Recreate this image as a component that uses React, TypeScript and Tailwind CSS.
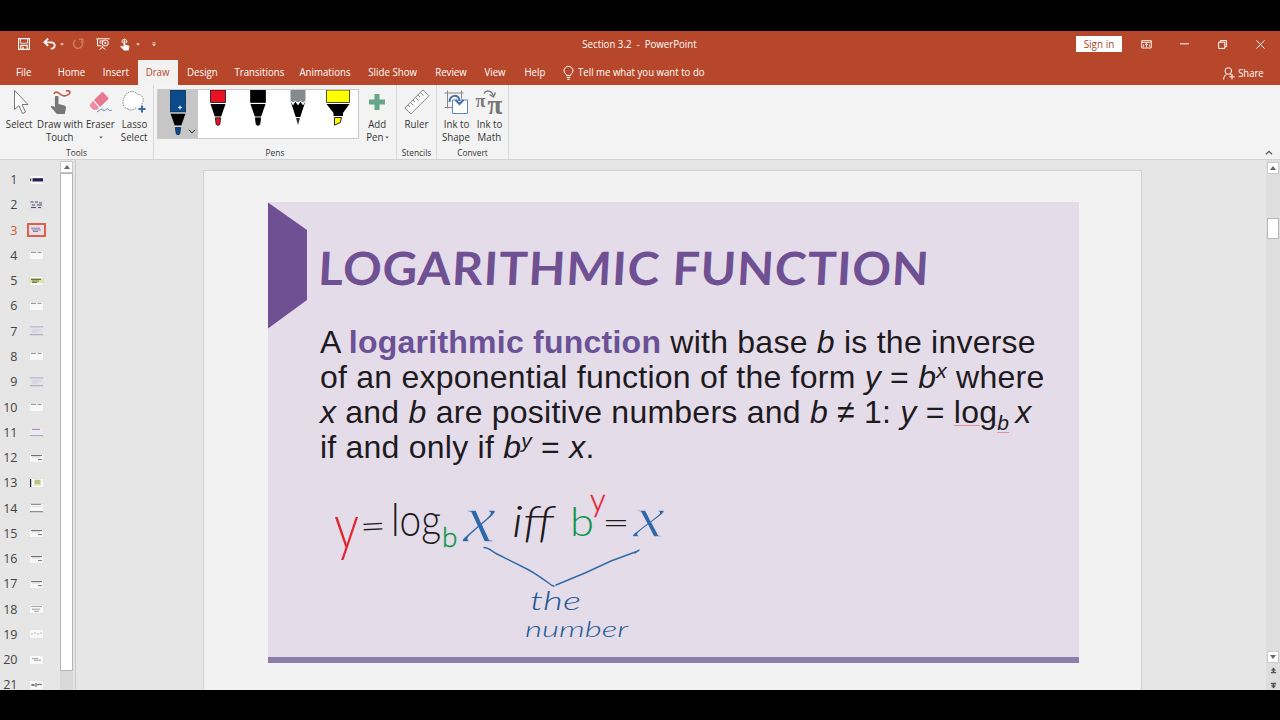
import type { ReactNode } from 'react';
import { clsx } from 'clsx';

const tabs = [
  { label: 'File', width: 'w-12' },
  { label: 'Home', width: 'w-12' },
  { label: 'Insert', width: 'w-[42px] pr-0.5' },
  { label: 'Draw', width: 'w-10' },
  { label: 'Design', width: 'w-12' },
  { label: 'Transitions', width: 'w-[66px]' },
  { label: 'Animations', width: 'w-[66px]' },
  { label: 'Slide Show', width: 'w-[70px]' },
  { label: 'Review', width: 'w-[46px]' },
  { label: 'View', width: 'w-[42px]' },
  { label: 'Help', width: 'w-[38px]' },
];

// kind decides what is sketched inside the tiny slide preview
const slides = [
  'dark', 'dense', 'text', 'top', 'green', 'top', 'bars', 'top', 'bars', 'top', 'purple',
  'corner', 'side', 'lines', 'corner', 'corner', 'corner', 'para', 'faint', 'mid', 'graph',
];

function Thumb({ kind }: { kind: string }) {
  return (
    <svg width="15" height="10" viewBox="0 0 15 10" fill="none">
      <rect width="15" height="10" fill="#f8f8f8" />
      <rect x=".25" y=".25" width="14.5" height="9.5" stroke="#d2d2d6" strokeWidth=".5" />
      {kind === 'dark' && <><rect x="3.5" y="3.2" width="10.5" height="3.3" fill="#25204f" /><rect x="1" y="3.5" width="1.3" height="2.6" fill="#444" /></>}
      {kind === 'dense' && <><rect x="1" y="1" width="13" height="8" fill="#dcdce6" /><path d="M1.5 2h3M6 2h3M10 3h3M3 5h3M8 5h5M2 7.5h5M9 7.5h3" stroke="#55556b" strokeWidth="1.1" /></>}
      {kind === 'text' && <><rect width="15" height="10" fill="#e7e0ea" /><path d="M2 3.2h9M3 5h9M4 6.5h5" stroke="#8c7da0" strokeWidth="1" /></>}
      {kind === 'top' && <path d="M2 2.3h5M8.5 2.3h4" stroke="#85858d" strokeWidth="1" />}
      {kind === 'green' && <><rect y="2" width="15" height="5" fill="#dce4b0" /><path d="M2 3.4h10M3 5h7M3 6.5h5" stroke="#6d7840" strokeWidth="1.1" /></>}
      {kind === 'bars' && <><rect x="1" y="2" width="13" height="6" fill="#e2e2ed" /><path d="M1 1h13M1 8.7h13" stroke="#a3a3ae" /><path d="M3 4h9M3 6h6" stroke="#c2c2d0" strokeWidth=".6" /></>}
      {kind === 'purple' && <><rect x="1" y="1" width="13" height="8" fill="#eee8f2" /><path d="M3 2.4h8" stroke="#9784a6" /><path d="M1 8.6h13" stroke="#aaa0b4" /></>}
      {kind === 'corner' && <><path d="M2 2.5h11" stroke="#70707a" strokeWidth="1.2" /><path d="M3 4h8" stroke="#b4b4ba" strokeWidth=".5" /><path d="M9 6.6h4" stroke="#777" /></>}
      {kind === 'side' && <><rect x="1" y="1" width="1.2" height="8" fill="#24234d" /><rect x="5" y="1.5" width="7" height="6" fill="#dde1ac" /><path d="M6 3h5M6 5h5" stroke="#89904e" strokeWidth=".8" /></>}
      {kind === 'lines' && <><path d="M2 1.3h10M1 8.7h13" stroke="#77777f" /><path d="M3 3.5h9" stroke="#ccc" strokeWidth=".6" /></>}
      {kind === 'para' && <path d="M2 2.4h11M3 5.2h8M5 7.3h5" stroke="#92929a" strokeWidth=".9" />}
      {kind === 'faint' && <path d="M2 5h2M5 4h2M8 5h2M11 4h2" stroke="#aaa" strokeWidth=".8" />}
      {kind === 'mid' && <path d="M3 3.6h6M5 5.2h7" stroke="#999" strokeWidth=".9" />}
      {kind === 'graph' && <path d="M2 5h4M7 3v4M8 5l3-1 2 1M4 4v2" stroke="#555" strokeWidth="1" />}
    </svg>
  );
}

function SaveIcon() {
  return (
    <svg width="12" height="12" viewBox="0 0 12 12" fill="none" stroke="#fff" strokeWidth="1.1">
      <path d="M.6.6h10.8v10.8H.6z" />
      <path d="M2.4.6v4.6h7.2V.6" strokeWidth=".8" />
      <path d="M2.8 11V7.4h6.4V11" />
      <path d="M5 8.7V11" strokeWidth="1.3" />
    </svg>
  );
}

function UndoIcon() {
  return (
    <svg width="13" height="12" viewBox="0 0 13 12" fill="none" stroke="#fff" strokeWidth="1.8">
      <path d="M5.2.7 1.3 4.3l3.9 3.6M1.5 4.3h6.6c5 0 4.7 6.3-.3 6.3" />
    </svg>
  );
}

function RedoIcon() {
  return (
    <svg width="12" height="12" viewBox="0 0 12 12" fill="none" stroke="#d2795c" strokeWidth="1.5">
      <path d="M3.4 2.2a4.5 4.5 0 1 0 5.8.5M6.8 1.2h3.9v3.7" />
    </svg>
  );
}

function ShowIcon() {
  return (
    <svg width="14" height="12" viewBox="0 0 14 12" fill="none" stroke="#fff" strokeWidth="1">
      <path d="M.3.8h13.4M1.5 1v6.8h4M6.5 8v2M3.6 11.4l2.9-2 2.9 2M3.4 3h4M3.4 5h2" />
      <circle cx="9.3" cy="5" r="3" />
      <path d="m8.5 3.6 2.2 1.4-2.2 1.4z" fill="#fff" stroke="none" />
    </svg>
  );
}

function HandIcon({ className }: { className: string }) {
  return (
    <svg className={className} viewBox="0 0 18 20" fill="currentColor">
      <path d="M5 1.5a2 2 0 0 1 4 0V9l6.5 1.6a2.4 2.4 0 0 1 1.8 2.7L16 20H7.2L.8 12.8c-.8-1 .6-2.6 2-1.8L5 12.4z" />
    </svg>
  );
}

function TapIcon() {
  return (
    <svg width="10" height="13" viewBox="0 0 10 13" fill="none">
      <path d="M2.5 5a2.4 2.4 0 1 1 3.8 0" stroke="#fff" />
      <path d="M3.500 3.200a.9.900 0 0 1 1.800 0v3.600l3.200.8q1 .3.800 1.500L8.600 12.500H4L.6 8.900c-.4-.7.4-1.400 1.200-1l1.700.9z" fill="#fff" />
    </svg>
  );
}

function Caret({ className }: { className: string }) {
  return (
    <svg className={className} width="4" height="3" viewBox="0 0 5 3" fill="currentColor">
      <path d="M.3.3h4.4L2.5 2.8z" />
    </svg>
  );
}

function ToolButton({ icon, lines, width, caret }: { icon: ReactNode; lines: string[]; width: string; caret?: boolean }) {
  return (
    <div className={clsx('flex shrink-0 flex-col items-center', width)}>
      <div className="flex h-8 items-center justify-center pt-0.5">{icon}</div>
      {lines.map((line, i) => (
        <div key={line} className="flex h-[13px] items-center leading-[13px] whitespace-nowrap">
          <span className="scale-x-[0.88]">{line}</span>
          {caret && i === 1 && <Caret className="mt-0.5 text-[#555]" />}
        </div>
      ))}
      {caret && lines.length === 1 && <Caret className="mt-1.5 text-[#555]" />}
    </div>
  );
}

function GroupLabel({ children }: { children: string }) {
  return <div className="h-[13px] scale-x-[0.88] text-center text-[9.5px] leading-[13px]">{children}</div>;
}

function Pen({ color }: { color: string }) {
  return (
    <svg width="18" height="37" viewBox="0 0 18 37">
      <path d="M1.5 0h15v12.5h-15z" fill={color} stroke="#111" strokeWidth=".8" />
      <path d="M1.5 14h15L12.2 26.5H5.8z" fill="#000" />
      <path d="M6.3 27.8h5.4l-.9 6.8q-1.8 1.6-3.6 0z" fill={color} stroke="#111" strokeWidth=".8" />
    </svg>
  );
}

function Pencil() {
  return (
    <svg width="18" height="37" viewBox="0 0 18 37">
      <path d="M1.5 0h15v12h-15z" fill="#858a8d" />
      <path d="m1.5 11 2.5 4 2.3-3.6L9 15l2.6-3.6L14 15l2.5-4-5.2 16H6.7z" fill="#000" />
      <path d="m1.5 10.5 2.5 4 2.4-3.6L9 14.5l2.5-3.6 2.5 3.6 2.5-4" fill="none" stroke="#fff" />
      <path d="M7 28h4l-2 7z" fill="#333" />
    </svg>
  );
}

function Highlighter() {
  return (
    <svg width="26" height="37" viewBox="0 0 26 37">
      <path d="M1.5 0h23v12.5h-23z" fill="#ff0" stroke="#222" strokeWidth=".8" />
      <path d="M1.5 14h23L18 23v3H8.500v-3z" fill="#000" />
      <path d="M9.5 27.500h7l-1.200 5-5.800 2.600z" fill="#ff0" stroke="#222" />
    </svg>
  );
}

function Ink() {
  return (
    <svg className="absolute top-[278px] left-[50.5px]" width="370" height="170" viewBox="320 480 370 170" fill="none">
      <g fontFamily="Lato, sans-serif" fontWeight="300" fontSize="50">
        <text x="335" y="549" fontSize="66" textLength="25" lengthAdjust="spacingAndGlyphs" fill="#e2252f">y</text>
        <text x="361" y="538" fontSize="34" textLength="26" lengthAdjust="spacingAndGlyphs" fill="#1d1a20" transform="rotate(-3 374 529)">=</text>
        <text x="392" y="536" fontSize="45" textLength="50" lengthAdjust="spacingAndGlyphs" fill="#1d1a20">log</text>
        <text x="443" y="547" fontSize="28" fill="#12964a" stroke="#12964a" strokeWidth=".4">b</text>
        <text x="513" y="537" fontSize="43" fontStyle="italic" textLength="42" lengthAdjust="spacingAndGlyphs" fill="#1d1a20">iff</text>
        <text x="571" y="536" fontSize="40" textLength="24" lengthAdjust="spacingAndGlyphs" fill="#12964a">b</text>
        <text x="591" y="511" fontSize="31" fill="#e2252f" stroke="#e2252f" strokeWidth=".4">y</text>
        <text x="603" y="533" fontSize="30" textLength="28" lengthAdjust="spacingAndGlyphs" fill="#1d1a20">=</text>
        <text x="531" y="610" fontSize="25" fontStyle="italic" textLength="51" lengthAdjust="spacingAndGlyphs" fill="#245a94">the</text>
        <text x="526" y="637" fontSize="22" fontStyle="italic" textLength="103" lengthAdjust="spacingAndGlyphs" fill="#245a94">number</text>
      </g>
      <g fontFamily="'Liberation Serif', serif" fontStyle="italic" fill="#2c68aa" stroke="#e5dcea" strokeWidth="1.3">
        <text x="464" y="542" fontSize="70" textLength="33" lengthAdjust="spacingAndGlyphs">x</text>
        <text x="634" y="537" fontSize="60" textLength="32" lengthAdjust="spacingAndGlyphs">x</text>
      </g>
      <path d="M485 547.5c5 0 8 4 13 6.500l26 13c11 5 20 12 29 18.500l2 .5M557 585l29-12 26-12 27-10m-3 2 4-3" stroke="#326aa5" strokeWidth="1.4" strokeLinecap="round" />
    </svg>
  );
}

export default function App() {
  return (
    <div className="flex h-[720px] w-[1280px] flex-col overflow-hidden bg-black pt-[31px] pb-[30px] font-['Open_Sans',sans-serif] text-[11px] text-[#333]">
      <header className="h-[54px] shrink-0 bg-[#b7472a] text-white">
        <div className="flex h-7 items-center pb-0.5">
          <div className="flex w-[560px] items-center pl-[18px]">
            <SaveIcon />
            <div className="ml-[13px]"><UndoIcon /></div>
            <Caret className="ml-1" />
            <div className="ml-2"><RedoIcon /></div>
            <div className="ml-3"><ShowIcon /></div>
            <div className="ml-2.5"><TapIcon /></div>
            <Caret className="ml-1.5" />
            <svg className="ml-3" width="4" height="5" viewBox="0 0 5 5" fill="#fff"><path d="M.5 0h4v.8h-4zM.3 2.3h4.4L2.5 4.800z" /></svg>
          </div>
          <div className="w-[159px] scale-x-[0.88] text-center whitespace-pre">Section 3.2  -  PowerPoint</div>
          <div className="ml-auto flex items-center">
            <div className="flex h-4 w-[46px] items-center justify-center bg-white text-[#a4452c]">
              <span className="scale-x-[0.9]">Sign in</span>
            </div>
            <svg className="ml-[19px]" width="11" height="9" viewBox="0 0 12 10" fill="none" stroke="#fff"><path d="M.7.7h10.600v8.200H.7zM.7 2.500h10.600M6 8V4M4.200 5.500 6 3.800l1.800 1.700M2.500 5v2.500M9.500 5v2.500" /></svg>
            <svg className="ml-7" width="9" height="2" viewBox="0 0 9 2"><path d="M0 .8h9" stroke="#fff" /></svg>
            <svg className="ml-[29px]" width="9" height="9" viewBox="0 0 9 9" fill="none" stroke="#fff"><path d="M.6 2.200h6.200v6.200H.6zM2.300 2V.600h6.100v6.100H7" /></svg>
            <svg className="mr-[15px] ml-[29px]" width="9" height="9" viewBox="0 0 9 9"><path d="m.5.5 8 8m0-8-8 8" stroke="#fff" /></svg>
          </div>
        </div>
        <div className="flex h-[26px] items-end">
          {tabs.map((tab) => (
            <div
              key={tab.label}
              className={clsx(
                'flex h-[25px] shrink-0 items-center justify-center whitespace-nowrap',
                tab.width,
                tab.label === 'Draw' && 'bg-[#f3f2f1] text-[#b7472a]',
              )}
            >
              <span className="scale-x-[0.88]">{tab.label}</span>
            </div>
          ))}
          <div className="ml-[9px] flex h-[25px] items-center gap-1 whitespace-nowrap">
            <svg width="11" height="14" viewBox="0 0 11 14" fill="none" stroke="#fff"><path d="M3.500 9.500C3.500 8 1 7 1 4.700a4.500 4.300 0 0 1 9 0C10 7 7.500 8 7.500 9.500zM3.700 11.500h3.600M4.300 13.300h2.400" /></svg>
            <span className="origin-left scale-x-[0.875]">Tell me what you want to do</span>
          </div>
          <div className="mr-4 ml-auto flex h-6 items-center">
            <svg width="12" height="13" viewBox="0 0 12 13" fill="none" stroke="#fff"><circle cx="5.300" cy="4" r="3.300" /><path d="M.6 12.500C.8 9.500 2 8 3.700 7M7 7l1.500 1.500M9 7v5.500M6.300 9.800h5.500" /></svg>
            <span className="-ml-px origin-right scale-x-[0.86]">Share</span>
          </div>
        </div>
      </header>

      <section className="flex h-[75px] shrink-0 border-b border-[#d2d2d2] bg-[#f3f3f3]">
        <div className="flex w-[154px] flex-col justify-between border-r border-[#d9d9d9]">
          <div className="flex">
            <ToolButton
              width="w-[38px]"
              lines={['Select']}
              icon={<svg className="ml-1" width="16" height="26" viewBox="0 0 16 26" fill="#fff" stroke="#777"><path d="M1.500 1.500v19l4.500-4 3.500 8 3-1.300-3.500-7.700h6z" /></svg>}
            />
            <ToolButton
              width="w-[43px]"
              lines={['Draw with', 'Touch']}
              icon={
                <div className="relative h-6 w-6">
                  <HandIcon className="absolute bottom-0 left-0.5 h-[18px] w-[17px] text-[#777]" />
                  <svg className="absolute top-0 left-1" width="20" height="10" viewBox="0 0 20 10" fill="none" stroke="#bd5c49" strokeWidth="1.7"><path d="M2 4c1-3 4-2 6 0s6 3 9 0c2-2 0-4-3-3" /></svg>
                </div>
              }
            />
            <ToolButton
              width="w-[39px]"
              lines={['Eraser']}
              caret
              icon={<svg width="25" height="23" viewBox="0 0 25 23"><path d="M13.500 1.500q1-1 2 0l4.500 5q1 1 0 2L12 16l-6-7z" fill="#e87993" /><path d="m5 9.700 6 7-2 2H5L2.500 16q-1.500-1.500 0-3z" fill="#ee8ca3" /><path d="M9 21c4-3 6-4 6-2s2 0 4-1 1 3 5 1" fill="none" stroke="#718eb5" /></svg>}
            />
            <ToolButton
              width="w-[28px]"
              lines={['Lasso', 'Select']}
              icon={<svg width="25" height="24" viewBox="0 0 25 24" fill="none"><path d="M6 19C-1 17 1 9 2.500 7 4 1 12 0 15 4c8 1 7 8 4 11M6 19c3 2 5 1 8-1" fill="#fff" stroke="#888" strokeDasharray="1.500 1" /><path d="M20 15.500v7M16.500 19h7" stroke="#3a6da8" strokeWidth="2" /></svg>}
            />
          </div>
          <GroupLabel>Tools</GroupLabel>
        </div>

        <div className="flex w-[243px] flex-col justify-between border-r border-[#d9d9d9]">
          <div className="flex">
            <div className="mt-1 ml-[3px] flex h-[50px] w-[202px] border border-[#c9c9c9] bg-white">
              <div className="relative flex w-10 justify-center bg-[#c6c6c6]">
                <svg width="18" height="47" viewBox="0 0 18 47">
                  <path d="M1.500 0h15v22h-15z" fill="#0b4b8c" stroke="#082b50" strokeWidth=".8" />
                  <path d="M11 15.500v4M9 17.500h4" stroke="#fff" strokeWidth="1" />
                  <path d="M1.500 23.500h15l-4.200 12H5.700z" fill="#000" />
                  <path d="M2 23h14M5.500 36.300h7" stroke="#ddd" strokeWidth=".8" />
                  <path d="M6.300 37.500h5.400l-1 6.500q-1.700 1.600-3.400 0z" fill="#0b4b8c" stroke="#082b50" strokeWidth=".8" />
                </svg>
                <svg className="absolute right-0.5 bottom-1" width="8" height="5" viewBox="0 0 8 5" fill="none" stroke="#222"><path d="m.7.7 3.300 3.200L7.300.7" /></svg>
              </div>
              <div className="flex w-10 justify-center"><Pen color="#e81224" /></div>
              <div className="flex w-10 justify-center"><Pen color="#000000" /></div>
              <div className="flex w-10 justify-center"><Pencil /></div>
              <div className="flex w-10 justify-center"><Highlighter /></div>
            </div>
            <ToolButton
              width="w-[36px]"
              lines={['Add', 'Pen']}
              caret
              icon={<svg width="16" height="16" viewBox="0 0 16 16"><path d="M5.500 0h5v5.500H16v5h-5.500V16h-5v-5.500H0v-5h5.500z" fill="#67a58d" /></svg>}
            />
          </div>
          <GroupLabel>Pens</GroupLabel>
        </div>

        <div className="flex w-10 flex-col justify-between border-r border-[#d9d9d9]">
          <ToolButton
            width="w-[39px]"
            lines={['Ruler']}
            icon={<svg width="26" height="26" viewBox="0 0 26 26" fill="#fafafa" stroke="#858585"><path d="M.8 19 19 .8l6 6L6.800 25zM4 16l2 2M6.500 13.500l3 3M9 11l2 2M11.500 8.500l3 3M14 6l2 2M16.500 3.500l3 3" /></svg>}
          />
          <GroupLabel>Stencils</GroupLabel>
        </div>

        <div className="flex w-[72px] flex-col justify-between border-r border-[#d9d9d9]">
          <div className="flex pl-px">
            <ToolButton
              width="w-[36px]"
              lines={['Ink to', 'Shape']}
              icon={<svg width="25" height="25" viewBox="0 0 25 25" fill="none"><path d="M.5 3h19M3.500.5v18M17.500.5v8M.5 17.500h8" stroke="#888" /><path d="M8.500 10h15v13.500h-15z" fill="#fff" stroke="#6288b8" /><path d="M5.500 12c0-8 10-8 10-1m-4-1 4 4 4-4" stroke="#486fa5" strokeWidth="2" /></svg>}
            />
            <ToolButton
              width="w-[31px]"
              lines={['Ink to', 'Math']}
              icon={
                <div className="relative flex h-[25px] w-[26px] pt-0.5 font-['Liberation_Serif',serif] font-bold text-[#777]">
                  <span className="-ml-px h-4 w-2.5 text-[18px] leading-[18px]">π</span>
                  <span className="mt-[5px] ml-0.5 h-4 text-[27px] leading-4">π</span>
                  <svg className="absolute top-0 left-1.5" width="14" height="8" viewBox="0 0 14 8" fill="none" stroke="#777" strokeWidth="1.4"><path d="M1 3.500c2-4 8-3 9 2M6.500 4.500 10.500 7l2-4.500" /></svg>
                </div>
              }
            />
          </div>
          <GroupLabel>Convert</GroupLabel>
        </div>
        <div className="mt-auto mr-[7px] mb-1 ml-auto">
          <svg width="8" height="5" viewBox="0 0 8 5" fill="none" stroke="#555" strokeWidth="1.3"><path d="m1 4.300 3-3 3 3" /></svg>
        </div>
      </section>

      <main className="flex h-[530px] min-h-0 overflow-hidden bg-[#e6e6e6]">
        <aside className="flex h-full w-[76px] shrink-0 border-r border-[#c9c9c9]">
          <div className="w-[60px] pt-[7px]">
            {slides.map((kind, i) => (
              <div key={i} className="flex h-[25.28px] items-center">
                <span className={clsx('w-[17px] pt-px text-right text-[12.5px] leading-4 tracking-[-0.3px]', i === 2 ? 'text-[#d0583c]' : 'text-[#444]')}>{i + 1}</span>
                <div className={clsx('flex', i === 2 ? 'ml-2.5 border-2 border-[#dd6047]' : 'ml-3')}>
                  <Thumb kind={kind} />
                </div>
              </div>
            ))}
          </div>
          <div className="w-[13px] pt-px">
            <div className="flex h-3 items-center justify-center border border-[#c8c8c8] bg-white">
              <svg width="6" height="4" viewBox="0 0 6 4"><path d="M0 4h6L3 0z" fill="#666" /></svg>
            </div>
            <div className="h-[498px] border border-[#b4b4b4] bg-white" />
            <div className="h-5 bg-[#d9d9d9]" />
          </div>
        </aside>

        <div className="flex flex-1 pt-[10px] pl-[127px]">
          <div className="h-[530px] w-[939px] border border-[#d0d0d0] bg-[#f2f2f2] pt-[31px] pl-[64.4px]">
            <div className="relative h-[461px] w-[811px] border-b-[6px] border-[#8e7cab] bg-[#e5dcea]">
              <svg className="absolute top-0 left-0" width="40" height="127" viewBox="0 0 40 127"><path d="M0 .5 39 28v70L0 126.500z" fill="#6f5092" /></svg>
              <h1 className="absolute top-[37.5px] left-[49px] origin-bottom-left scale-x-[1.04] -skew-x-3 font-['Lato',sans-serif] text-[46px] leading-[56px] font-bold tracking-[0.9px] whitespace-nowrap text-[#6f5092]">
                LOGARITHMIC FUNCTION
              </h1>
              <div className="pt-[122.6px] pl-[51.5px] font-['Liberation_Sans',Arial,sans-serif] text-[32px] leading-[35.2px] tracking-[0.24px] whitespace-nowrap text-[#1d1a20]">
                <p>A <b className="text-[#6b5196]">logarithmic function</b> with base <i>b</i> is the inverse</p>
                <p>of an exponential function of the form <i>y</i> = <i>b</i><sup className="-top-[10px] text-[21px] leading-none"><i>x</i></sup> where</p>
                <p>
                  <i>x</i> and <i>b</i> are positive numbers and <i>b</i> ≠ 1: <i>y</i> ={' '}
                  <span className="underline decoration-[#e58f9c] decoration-1 underline-offset-2">log</span>
                  <sub className="bottom-[-7px] text-[21px] leading-none underline decoration-[#e58f9c] decoration-1 underline-offset-2"><i>b</i></sub>
                  <i className="ml-1.5">x</i>
                </p>
                <p>if and only if <i>b</i><sup className="-top-[10px] text-[21px] leading-none"><i>y</i></sup> = <i>x</i>.</p>
              </div>
              <Ink />
            </div>
          </div>
        </div>

        <div className="flex w-[14px] shrink-0 flex-col items-center bg-[#dedede] pt-0.5">
          <div className="flex h-3 w-3 items-center justify-center border border-[#cacaca] bg-white">
            <svg width="6" height="4" viewBox="0 0 6 4"><path d="M0 4h6L3 0z" fill="#666" /></svg>
          </div>
          <div className="mt-[44px] h-[21px] w-3 border border-[#b8b8b8] bg-white" />
          <div className="mt-auto flex h-3 w-3 items-center justify-center border border-[#cacaca] bg-white">
            <svg width="6" height="4" viewBox="0 0 6 4"><path d="M0 0h6L3 4z" fill="#666" /></svg>
          </div>
          <svg className="mt-1" width="7" height="8" viewBox="0 0 8 8" fill="#555"><path d="m4 0 3 3.500H5V5h2v1.500H1V5h2V3.500H1z" /></svg>
          <svg className="mt-1.5 mb-px" width="7" height="8" viewBox="0 0 8 8" fill="#555"><path d="m4 8 3-3.500H5V3h2V1.500H1V3h2v1.500H1z" /></svg>
        </div>
      </main>
    </div>
  );
}
